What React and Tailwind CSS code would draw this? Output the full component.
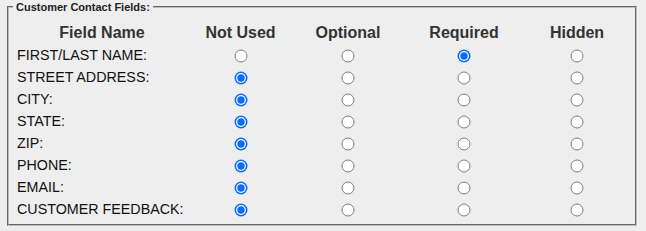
import React from "react";

const fields = [
  ["FIRST/LAST NAME:", 2],
  ["STREET ADDRESS:", 0],
  ["CITY:", 0],
  ["STATE:", 0],
  ["ZIP:", 0],
  ["PHONE:", 0],
  ["EMAIL:", 0],
  ["CUSTOMER FEEDBACK:", 0],
];

const headers = ["Not Used", "Optional", "Required", "Hidden"];

function Radio({ checked }) {
  return (
    <svg width="14" height="14" viewBox="0 0 14 14" className="block">
      {checked ? (
        <>
          <circle cx="7" cy="7" r="6.5" fill="#0b6cf6" />
          <circle cx="7" cy="7" r="4.9" fill="#ffffff" />
          <circle cx="7" cy="7" r="3.7" fill="#0b6cf6" />
        </>
      ) : (
        <circle cx="7" cy="7" r="6" fill="#ffffff" stroke="#7f7f7f" strokeWidth="1" />
      )}
    </svg>
  );
}

export default function App() {
  return (
    <div
      className="min-h-screen w-full bg-[#eeeeee] pt-0"
      style={{ fontFamily: '"Liberation Sans", Arial, Helvetica, sans-serif' }}
    >
      <fieldset className="ml-[7px] w-[630px] border-2 [border-style:groove] border-[#bcbcbc] pl-[4px] pr-[2px] pb-[3px] pt-0 m-0">
        <legend className="px-[3px] text-[11px] font-bold leading-[14px] text-[#222222]">
          Customer Contact Fields:
        </legend>
        <div className="grid grid-cols-[170px_107px_108px_124px_102px] pl-[4px] pt-[6px]">
          <div className="h-[25px] flex items-center justify-center text-[16px] font-bold text-[#333333]">
            Field Name
          </div>
          {headers.map((h) => (
            <div
              key={h}
              className="h-[25px] flex items-center justify-center text-[16px] font-bold text-[#333333] whitespace-nowrap"
            >
              {h}
            </div>
          ))}
          {fields.map(([label, sel]) => (
            <React.Fragment key={label}>
              <div className="h-[22px] flex items-center text-[14.3px] text-[#111111] whitespace-nowrap">
                {label}
              </div>
              {headers.map((h, i) => (
                <div key={h} className="h-[22px] flex items-center justify-center">
                  <Radio checked={i === sel} />
                </div>
              ))}
            </React.Fragment>
          ))}
        </div>
      </fieldset>
    </div>
  );
}
